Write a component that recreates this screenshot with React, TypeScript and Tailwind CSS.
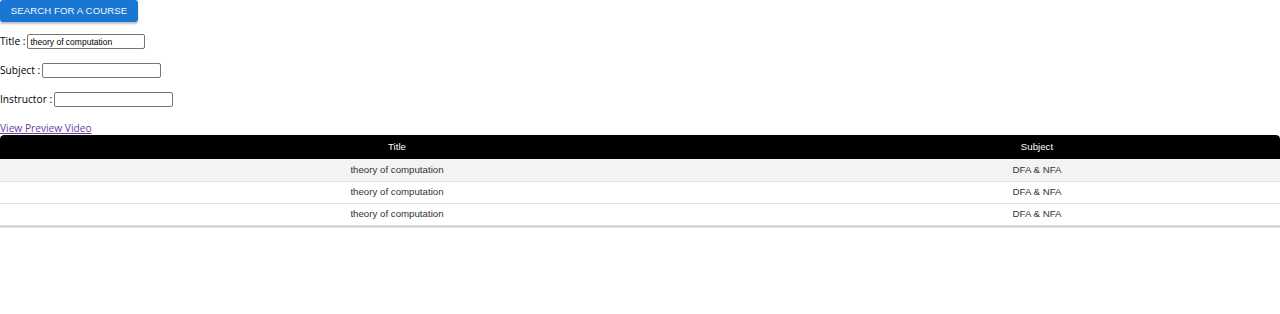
const rows = [
  { title: "theory of computation", subject: "DFA & NFA" },
  { title: "theory of computation", subject: "DFA & NFA" },
  { title: "theory of computation", subject: "DFA & NFA" },
];

function Field({ label, value, width }: { label: string; value?: string; width: string }) {
  return (
    <div className="flex items-center h-[15px] text-[10.2px] text-black [font-family:'Open_Sans',sans-serif]">
      <span className="mr-[2px]">{label} :</span>
      <input
        readOnly
        value={value ?? ""}
        className={`${width} h-[15px] border border-[#767676] rounded-[2px] px-[2px] text-[8.5px] text-black [font-family:'Liberation_Sans',Arial,sans-serif] outline-none`}
      />
    </div>
  );
}

export default function App() {
  return (
    <div className="w-[1280px] h-[314px] bg-white [font-family:'Liberation_Sans',Arial,sans-serif]">
      <button className="block w-[138px] h-[22px] bg-[#1976d2] text-[#f4f8fd] text-[9.6px] tracking-[0.1px] rounded-[3px] shadow-[0_2px_2px_rgba(0,0,0,0.25)]">
        SEARCH FOR A COURSE
      </button>

      <div className="flex flex-col gap-[14px] pt-[12px]">
        <Field label="Title" value="theory of computation" width="w-[118px]" />
        <Field label="Subject" width="w-[119px]" />
        <Field label="Instructor" width="w-[119px]" />
      </div>

      <a
        href="#"
        className="block mt-[15px] h-[13px] leading-[13px] text-[10.2px] text-[#6a3ea1] underline [font-family:'Open_Sans',sans-serif]"
      >
        View Preview Video
      </a>

      <table className="w-[1280px] border-collapse text-[9.7px] shadow-[0_1px_2px_rgba(0,0,0,0.3)] rounded-t-[4px] overflow-hidden">
        <thead>
          <tr className="bg-black text-white h-[24px]">
            <th className="w-[794px] font-normal rounded-tl-[4px]">Title</th>
            <th className="font-normal rounded-tr-[4px]">Subject</th>
          </tr>
        </thead>
        <tbody className="text-[#333]">
          {rows.map((r, i) => (
            <tr
              key={i}
              className={`h-[22px] border-b border-[#e2e2e2] ${i === 0 ? "bg-[#f3f3f3]" : "bg-white"}`}
            >
              <td className="text-center pt-[1px]">{r.title}</td>
              <td className="text-center pt-[1px]">{r.subject}</td>
            </tr>
          ))}
        </tbody>
      </table>
    </div>
  );
}
